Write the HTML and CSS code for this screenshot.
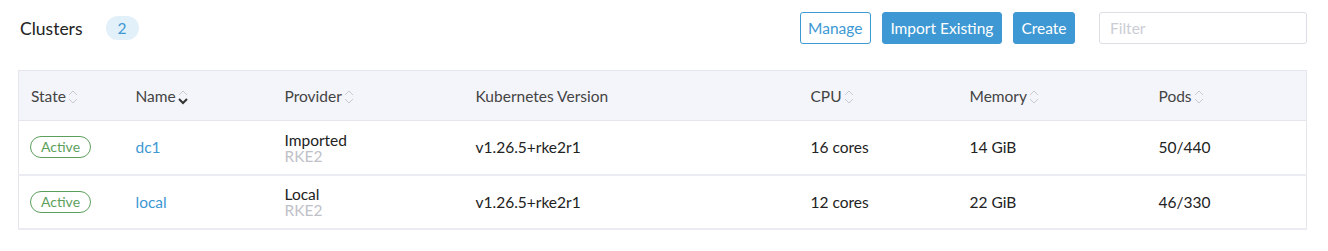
FILE: index.html
```html
<!DOCTYPE html>
<html lang="en">

<head>
    <meta charset="UTF-8">
    <meta name="viewport" content="width=device-width, initial-scale=1.0">
    <title>Clusters</title>
    <link rel="stylesheet" href="styles.css">
</head>

<body>
    <div class="page">
        <header class="masthead">
            <div class="title">
                <h1>Clusters</h1>
                <span class="count">2</span>
            </div>
            <div class="actions">
                <button class="btn btn-outline">Manage</button>
                <button class="btn btn-primary">Import Existing</button>
                <button class="btn btn-primary">Create</button>
                <input class="filter" type="text" placeholder="Filter">
            </div>
        </header>

        <table class="sortable-table">
            <colgroup>
                <col style="width: 105px">
                <col style="width: 149px">
                <col style="width: 191px">
                <col style="width: 335px">
                <col style="width: 159px">
                <col style="width: 189px">
                <col>
            </colgroup>
            <thead>
                <tr>
                    <th>State<svg class="sort" viewBox="0 0 10 16"><path d="M1 6 5 2l4 4M1 10l4 4 4-4"/></svg></th>
                    <th>Name<svg class="sort" viewBox="0 0 10 16"><path d="M1 6 5 2l4 4"/><path class="on" d="M1 10l4 4 4-4"/></svg></th>
                    <th>Provider<svg class="sort" viewBox="0 0 10 16"><path d="M1 6 5 2l4 4M1 10l4 4 4-4"/></svg></th>
                    <th>Kubernetes Version</th>
                    <th>CPU<svg class="sort" viewBox="0 0 10 16"><path d="M1 6 5 2l4 4M1 10l4 4 4-4"/></svg></th>
                    <th>Memory<svg class="sort" viewBox="0 0 10 16"><path d="M1 6 5 2l4 4M1 10l4 4 4-4"/></svg></th>
                    <th>Pods<svg class="sort" viewBox="0 0 10 16"><path d="M1 6 5 2l4 4M1 10l4 4 4-4"/></svg></th>
                </tr>
            </thead>
            <tbody>
                <tr>
                    <td><span class="state">Active</span></td>
                    <td><a href="#">dc1</a></td>
                    <td>Imported<div class="sub">RKE2</div></td>
                    <td>v1.26.5+rke2r1</td>
                    <td>16 cores</td>
                    <td>14 GiB</td>
                    <td>50/440</td>
                </tr>
                <tr>
                    <td><span class="state">Active</span></td>
                    <td><a href="#">local</a></td>
                    <td>Local<div class="sub">RKE2</div></td>
                    <td>v1.26.5+rke2r1</td>
                    <td>12 cores</td>
                    <td>22 GiB</td>
                    <td>46/330</td>
                </tr>
            </tbody>
        </table>
    </div>
</body>

</html>
```

FILE: styles.css
```css
* {
    box-sizing: border-box;
}

body {
    margin: 0;
    background: #fff;
    color: #222;
    font-family: Lato, "Noto Sans", sans-serif;
    font-size: 15.5px;
}

.page {
    padding: 12px 21px 0 18px;
}

.masthead {
    display: flex;
    justify-content: space-between;
    align-items: center;
    height: 32px;
    margin-bottom: 26px;
}

.title {
    display: flex;
    align-items: center;
    padding-left: 2px;
}

.title h1 {
    margin: 0;
    font-size: 17.5px;
    font-weight: 400;
    color: #222;
}

.count {
    margin-left: 23px;
    padding: 0 12px;
    height: 24px;
    line-height: 24px;
    border-radius: 12px;
    background: #e2f0fa;
    color: #3d98d3;
    font-size: 15.5px;
}

.actions {
    display: flex;
    align-items: center;
}

.btn {
    height: 32px;
    padding: 0 7.5px;
    margin-left: 11px;
    border-radius: 3px;
    font-family: inherit;
    font-size: 15.5px;
    cursor: pointer;
}

.btn-outline {
    background: #fff;
    color: #3d98d3;
    border: 1px solid #3d98d3;
}

.btn-primary {
    background: #3d98d3;
    color: #fff;
    border: 1px solid #3d98d3;
}

.filter {
    width: 208px;
    height: 32px;
    margin-left: 24px;
    padding: 0 10px;
    border: 1px solid #dcdee7;
    border-radius: 3px;
    font-family: inherit;
    font-size: 15.5px;
    color: #222;
}

.filter::placeholder {
    color: #cbcdd5;
}

.sortable-table {
    width: 1289px;
    border-collapse: collapse;
    table-layout: fixed;
    border: 1px solid #e5e6ed;
}

.sortable-table th {
    height: 50px;
    padding: 0 12px;
    background: #f4f5fa;
    border-bottom: 1px solid #e5e6ed;
    color: #444;
    font-weight: 400;
    text-align: left;
    white-space: nowrap;
}

.sortable-table td {
    height: 54px;
    padding: 0 12px;
    border-bottom: 2px solid #ebecf1;
    color: #222;
    vertical-align: middle;
}

.sort {
    width: 10px;
    height: 16px;
    margin-left: 2px;
    vertical-align: -3px;
    fill: none;
    stroke: #c8cad2;
    stroke-width: 1;
}

.sort .on {
    stroke: #333;
    stroke-width: 2;
}

.sortable-table a {
    color: #3d98d3;
    text-decoration: none;
}

.sub {
    color: #bfc1c9;
    line-height: 15px;
}

.state {
    display: inline-block;
    height: 22px;
    line-height: 20px;
    margin-left: -1px;
    padding: 0 10px;
    border: 1px solid #5c9f5c;
    border-radius: 11px;
    color: #5c9f5c;
    font-size: 14px;
}
```
